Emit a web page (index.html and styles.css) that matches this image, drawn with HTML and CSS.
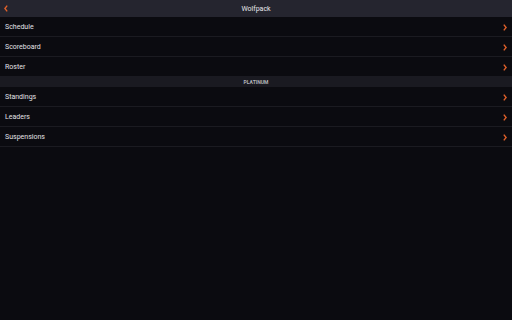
FILE: index.html
```html
<!DOCTYPE html>
<html lang="en">
<head>
    <meta charset="UTF-8">
    <title>Wolfpack</title>
    <link rel="stylesheet" href="styles.css">
</head>
<body>
    <div class="topbar">
        <svg class="back" width="4" height="7" viewBox="0 0 4 7"><path d="M3.2 0.6 L0.9 3.5 L3.2 6.4" fill="none" stroke="#e0602a" stroke-width="1.4"/></svg>
        <div class="title">Wolfpack</div>
    </div>

    <div class="list">
        <div class="row"><span>Schedule</span><svg class="chev" width="4" height="7" viewBox="0 0 4 7"><path d="M0.8 0.6 L3.1 3.5 L0.8 6.4" fill="none" stroke="#e0602a" stroke-width="1.4"/></svg></div>
        <div class="row"><span>Scoreboard</span><svg class="chev" width="4" height="7" viewBox="0 0 4 7"><path d="M0.8 0.6 L3.1 3.5 L0.8 6.4" fill="none" stroke="#e0602a" stroke-width="1.4"/></svg></div>
        <div class="row"><span>Roster</span><svg class="chev" width="4" height="7" viewBox="0 0 4 7"><path d="M0.8 0.6 L3.1 3.5 L0.8 6.4" fill="none" stroke="#e0602a" stroke-width="1.4"/></svg></div>
        <div class="section">PLATINUM</div>
        <div class="row"><span>Standings</span><svg class="chev" width="4" height="7" viewBox="0 0 4 7"><path d="M0.8 0.6 L3.1 3.5 L0.8 6.4" fill="none" stroke="#e0602a" stroke-width="1.4"/></svg></div>
        <div class="row"><span>Leaders</span><svg class="chev" width="4" height="7" viewBox="0 0 4 7"><path d="M0.8 0.6 L3.1 3.5 L0.8 6.4" fill="none" stroke="#e0602a" stroke-width="1.4"/></svg></div>
        <div class="row"><span>Suspensions</span><svg class="chev" width="4" height="7" viewBox="0 0 4 7"><path d="M0.8 0.6 L3.1 3.5 L0.8 6.4" fill="none" stroke="#e0602a" stroke-width="1.4"/></svg></div>
    </div>
</body>
</html>
```

FILE: styles.css
```css
html, body {
    margin: 0;
    padding: 0;
    height: 100%;
}
body {
    background: #0b0b10;
    color: #e2e2e6;
    font-family: Roboto, "Liberation Sans", sans-serif;
    font-size: 7px;
}
.topbar {
    position: relative;
    height: 17px;
    background: #25252f;
    display: flex;
    align-items: center;
    justify-content: center;
}
.back {
    position: absolute;
    left: 4px;
    top: 5px;
}
.title {
    font-size: 7px;
    color: #e6e6ea;
}
.row {
    height: 18px;
    padding: 1px 5px 0 5px;
    border-bottom: 1px solid #1b1b21;
    display: flex;
    align-items: center;
    justify-content: space-between;
}
.row span {
    font-size: 7px;
}
.chev {
    display: block;
}
.section {
    height: 11px;
    background: #1a1a21;
    color: #b4b4bc;
    font-size: 5px;
    font-weight: bold;
    display: flex;
    align-items: center;
    justify-content: center;
    margin-top: -1px;
}
```
